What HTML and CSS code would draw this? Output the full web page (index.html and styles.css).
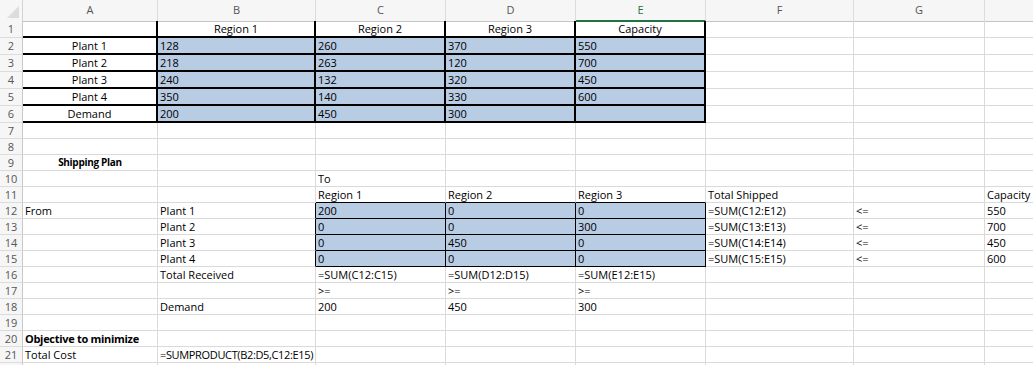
FILE: index.html
```html
<!DOCTYPE html>
<html>
<head>
<meta charset="utf-8">
<link rel="stylesheet" href="styles.css">
</head>
<body>
<div class="sheet">
  <div class="row hdr">
    <div class="corner"><svg width="22" height="20" viewBox="0 0 22 20"><polygon points="19,6 19,18 7,18" fill="#dcdcdc"/></svg></div>
    <div class="ch">A</div><div class="ch">B</div><div class="ch">C</div><div class="ch">D</div><div class="ch sel">E</div><div class="ch">F</div><div class="ch">G</div><div class="ch last"></div>
  </div>

  <div class="row t">
    <div class="rh">1</div>
    <div class="c tk"></div><div class="c tk ctr">Region 1</div><div class="c tk ctr">Region 2</div><div class="c tk ctr">Region 3</div><div class="c tk ctr">Capacity</div><div class="c"></div><div class="c"></div><div class="c"></div>
  </div>
  <div class="row t">
    <div class="rh">2</div>
    <div class="c tk ctr">Plant 1</div><div class="c tk blue">128</div><div class="c tk blue">260</div><div class="c tk blue">370</div><div class="c tk blue">550</div><div class="c"></div><div class="c"></div><div class="c"></div>
  </div>
  <div class="row t">
    <div class="rh">3</div>
    <div class="c tk ctr">Plant 2</div><div class="c tk blue">218</div><div class="c tk blue">263</div><div class="c tk blue">120</div><div class="c tk blue">700</div><div class="c"></div><div class="c"></div><div class="c"></div>
  </div>
  <div class="row t">
    <div class="rh">4</div>
    <div class="c tk ctr">Plant 3</div><div class="c tk blue">240</div><div class="c tk blue">132</div><div class="c tk blue">320</div><div class="c tk blue">450</div><div class="c"></div><div class="c"></div><div class="c"></div>
  </div>
  <div class="row t">
    <div class="rh">5</div>
    <div class="c tk ctr">Plant 4</div><div class="c tk blue">350</div><div class="c tk blue">140</div><div class="c tk blue">330</div><div class="c tk blue">600</div><div class="c"></div><div class="c"></div><div class="c"></div>
  </div>
  <div class="row t">
    <div class="rh">6</div>
    <div class="c tk ctr">Demand</div><div class="c tk blue">200</div><div class="c tk blue">450</div><div class="c tk blue">300</div><div class="c tk blue"></div><div class="c"></div><div class="c"></div><div class="c"></div>
  </div>

  <div class="row">
    <div class="rh">7</div>
    <div class="c"></div><div class="c"></div><div class="c"></div><div class="c"></div><div class="c"></div><div class="c"></div><div class="c"></div><div class="c"></div>
  </div>
  <div class="row">
    <div class="rh">8</div>
    <div class="c"></div><div class="c"></div><div class="c"></div><div class="c"></div><div class="c"></div><div class="c"></div><div class="c"></div><div class="c"></div>
  </div>
  <div class="row">
    <div class="rh">9</div>
    <div class="c ctr title">Shipping Plan</div><div class="c"></div><div class="c"></div><div class="c"></div><div class="c"></div><div class="c"></div><div class="c"></div><div class="c"></div>
  </div>
  <div class="row">
    <div class="rh">10</div>
    <div class="c"></div><div class="c"></div><div class="c">To</div><div class="c"></div><div class="c"></div><div class="c"></div><div class="c"></div><div class="c"></div>
  </div>
  <div class="row">
    <div class="rh">11</div>
    <div class="c"></div><div class="c"></div><div class="c bt">Region 1</div><div class="c bt">Region 2</div><div class="c bt">Region 3</div><div class="c">Total Shipped</div><div class="c"></div><div class="c">Capacity</div>
  </div>
  <div class="row">
    <div class="rh">12</div>
    <div class="c">From</div><div class="c br">Plant 1</div><div class="c bx">200</div><div class="c bx">0</div><div class="c bx">0</div><div class="c">=SUM(C12:E12)</div><div class="c">&lt;=</div><div class="c">550</div>
  </div>
  <div class="row">
    <div class="rh">13</div>
    <div class="c"></div><div class="c br">Plant 2</div><div class="c bx">0</div><div class="c bx">0</div><div class="c bx">300</div><div class="c">=SUM(C13:E13)</div><div class="c">&lt;=</div><div class="c">700</div>
  </div>
  <div class="row">
    <div class="rh">14</div>
    <div class="c"></div><div class="c br">Plant 3</div><div class="c bx">0</div><div class="c bx">450</div><div class="c bx">0</div><div class="c">=SUM(C14:E14)</div><div class="c">&lt;=</div><div class="c">450</div>
  </div>
  <div class="row">
    <div class="rh">15</div>
    <div class="c"></div><div class="c br">Plant 4</div><div class="c bx">0</div><div class="c bx">0</div><div class="c bx">0</div><div class="c">=SUM(C15:E15)</div><div class="c">&lt;=</div><div class="c">600</div>
  </div>
  <div class="row">
    <div class="rh">16</div>
    <div class="c"></div><div class="c">Total Received</div><div class="c">=SUM(C12:C15)</div><div class="c">=SUM(D12:D15)</div><div class="c">=SUM(E12:E15)</div><div class="c"></div><div class="c"></div><div class="c"></div>
  </div>
  <div class="row">
    <div class="rh">17</div>
    <div class="c"></div><div class="c"></div><div class="c">&gt;=</div><div class="c">&gt;=</div><div class="c">&gt;=</div><div class="c"></div><div class="c"></div><div class="c"></div>
  </div>
  <div class="row">
    <div class="rh">18</div>
    <div class="c"></div><div class="c">Demand</div><div class="c">200</div><div class="c">450</div><div class="c">300</div><div class="c"></div><div class="c"></div><div class="c"></div>
  </div>
  <div class="row">
    <div class="rh">19</div>
    <div class="c"></div><div class="c"></div><div class="c"></div><div class="c"></div><div class="c"></div><div class="c"></div><div class="c"></div><div class="c"></div>
  </div>
  <div class="row">
    <div class="rh">20</div>
    <div class="c bold">Objective to minimize</div><div class="c"></div><div class="c"></div><div class="c"></div><div class="c"></div><div class="c"></div><div class="c"></div><div class="c"></div>
  </div>
  <div class="row">
    <div class="rh">21</div>
    <div class="c">Total Cost</div><div class="c tight">=SUMPRODUCT(B2:D5,C12:E15)</div><div class="c"></div><div class="c"></div><div class="c"></div><div class="c"></div><div class="c"></div><div class="c"></div>
  </div>
  <div class="row">
    <div class="rh"></div>
    <div class="c"></div><div class="c"></div><div class="c"></div><div class="c"></div><div class="c"></div><div class="c"></div><div class="c"></div><div class="c"></div>
  </div>
</div>
</body>
</html>
```

FILE: styles.css
```css
html, body {
  margin: 0;
  padding: 0;
  background: #ffffff;
}

.sheet {
  width: 1033px;
  height: 365px;
  overflow: hidden;
  font-family: "Open Sans", "Noto Sans", sans-serif;
  font-size: 11px;
  color: #000;
}

.row {
  display: grid;
  grid-template-columns: 23px 135px 158px 130px 130px 130px 148px 131px 1fr;
  height: 16px;
}

.row.t {
  height: 17px;
}

.row.hdr {
  height: 21px;
}

.corner {
  background: #f6f6f6;
  border-right: 1px solid #d4d4d4;
  border-bottom: 1px solid #c4c4c4;
  box-sizing: border-box;
}

.corner svg {
  display: block;
}

.ch {
  background: #f6f6f6;
  border-right: 1px solid #dcdcdc;
  border-bottom: 1px solid #c4c4c4;
  box-sizing: border-box;
  text-align: center;
  line-height: 20px;
  color: #555;
  font-size: 11px;
}

.ch.sel {
  color: #217346;
  border-bottom: 2px solid #217346;
}

.ch.last {
  border-right: none;
}

.rh {
  background: #f6f6f6;
  border-right: 1px solid #c8c8c8;
  border-bottom: 1px solid #dcdcdc;
  box-sizing: border-box;
  text-align: center;
  color: #555;
  line-height: 15px;
  font-size: 11px;
}

.row.t .rh {
  line-height: 16px;
}

.c {
  border-right: 1px solid #dadada;
  border-bottom: 1px solid #dadada;
  box-sizing: border-box;
  padding: 0 2px;
  line-height: 15px;
  white-space: nowrap;
  min-width: 0;
}

.c:last-child {
  border-right: none;
}

.tk {
  border-right: 2px solid #000;
  border-bottom: 2px solid #000;
}

.blue {
  background: #b8cce4;
}

.ctr {
  text-align: center;
}

.bt {
  border-bottom: 1px solid #000;
}

.br {
  border-right: 1px solid #000;
}

.bx {
  background: #b8cce4;
  border-right: 1px solid #000;
  border-bottom: 1px solid #000;
}

.title {
  font-weight: bold;
  font-size: 10px;
  letter-spacing: -0.3px;
}

.bold {
  font-weight: bold;
  letter-spacing: -0.3px;
}

.tight {
  letter-spacing: -0.35px;
  overflow: hidden;
}
```
